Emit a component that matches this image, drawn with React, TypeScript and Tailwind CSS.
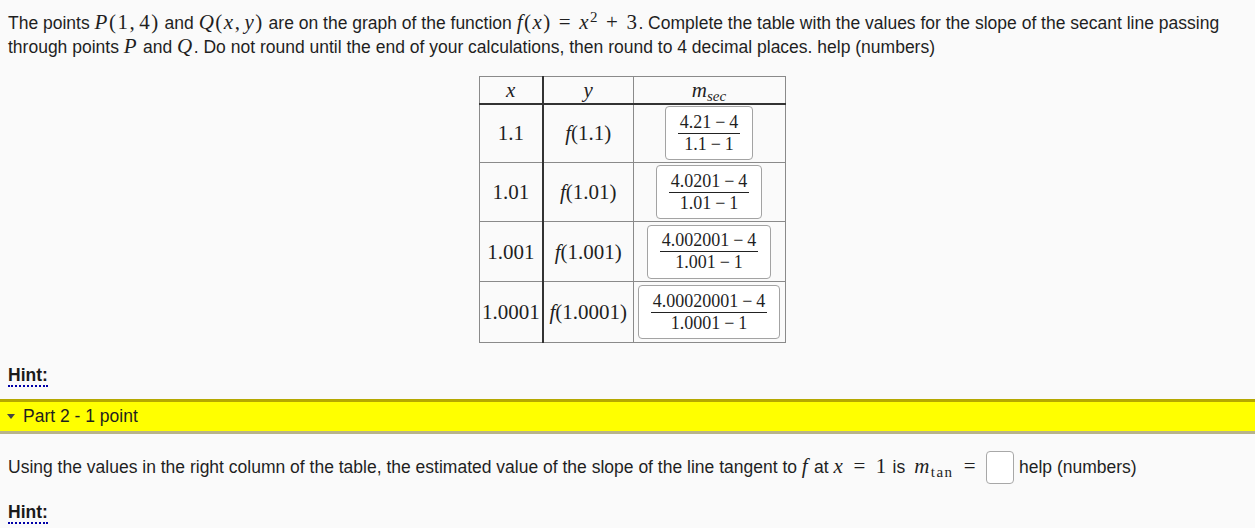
import type { ReactNode } from "react"

const serif = "font-['Liberation_Serif','Times_New_Roman',serif]"

function M({ children }: { children: ReactNode }) {
  return <span className={`${serif} text-[21px] leading-none tracking-[1.5px]`}>{children}</span>
}

function I({ children }: { children: ReactNode }) {
  return <span className="italic">{children}</span>
}

// binary operator with the math spacing around it
function Op({ children, gap = "mx-[7px]" }: { children: ReactNode; gap?: string }) {
  return <span className={gap}>{children}</span>
}

function Frac({ num, den }: { num: string; den: string }) {
  return (
    <span className={`${serif} inline-flex flex-col items-center text-[18px] leading-[21px]`}>
      <span className="px-[2px] border-b border-[#222]">
        {num}
        <Op gap="mx-[4px]">−</Op>4
      </span>
      <span className="px-[2px]">
        {den}
        <Op gap="mx-[4px]">−</Op>1
      </span>
    </span>
  )
}

function Hint() {
  return (
    <span className="font-bold text-[#1a1a1a] border-b-2 border-dotted border-[#0000a8] leading-[19px] inline-block">
      Hint:
    </span>
  )
}

const rows = [
  { x: "1.1", num: "4.21", den: "1.1", h: "h-[59px]" },
  { x: "1.01", num: "4.0201", den: "1.01", h: "h-[59px]" },
  { x: "1.001", num: "4.002001", den: "1.001", h: "h-[60px]" },
  { x: "1.0001", num: "4.00020001", den: "1.0001", h: "h-[61px]" },
]

export default function App() {
  return (
    <div className="min-h-screen bg-[#fafafa] text-[#1f1f1f] font-['Liberation_Sans',Arial,sans-serif] text-[17.5px]">
      <p className="px-2 pt-[11px] leading-[24px]">
        The points{" "}
        <M>
          <I>P</I>(1,<span className="ml-[3px]">4</span>)
        </M>{" "}
        and{" "}
        <M>
          <I>Q</I>(<I>x</I>,<span className="ml-[3px]" />
          <I>y</I>)
        </M>{" "}
        are on the graph of the function{" "}
        <M>
          <I>f</I>(<I>x</I>)<Op>=</Op>
          <I>x</I>
          <sup className="text-[15px]">2</sup>
          <Op>+</Op>3
        </M>
        . Complete the table with the values for the slope of the secant line passing through points{" "}
        <M>
          <I>P</I>
        </M>{" "}
        and{" "}
        <M>
          <I>Q</I>
        </M>
        . Do not round until the end of your calculations, then round to 4 decimal places. help (numbers)
      </p>

      <div className="flex justify-center pl-[9px] mt-[17px]">
        <table className={`${serif} border-collapse border border-[#8a8a8a] text-[21px] leading-[22px]`}>
          <thead>
            <tr className="h-[27px] border-b-2 border-[#333]">
              <th className="w-[64px] font-normal italic border-r-2 border-[#333] p-0">x</th>
              <th className="w-[90px] font-normal italic border-r border-[#8a8a8a] p-0">y</th>
              <th className="w-[152px] font-normal italic p-0">
                m<sub className="text-[15px]">sec</sub>
              </th>
            </tr>
          </thead>
          <tbody>
            {rows.map((r) => (
              <tr key={r.x} className={`${r.h} border-b border-[#8a8a8a]`}>
                <td className="text-center border-r-2 border-[#333] p-0">{r.x}</td>
                <td className="text-center border-r border-[#8a8a8a] p-0">
                  <I>f</I>({r.x})
                </td>
                <td className="text-center p-0">
                  <span className="inline-flex items-center justify-center border border-[#a3a3a3] rounded-[4px] bg-white h-[54px] px-[12px] align-middle">
                    <Frac num={r.num} den={r.den} />
                  </span>
                </td>
              </tr>
            ))}
          </tbody>
        </table>
      </div>

      <div className="px-2 mt-[19px] h-[37px]">
        <Hint />
      </div>

      <div className="h-[35px] bg-[#ffff00] border-t-[3px] border-b-[3px] border-t-[#b5a800] border-b-[#b8b48a] flex items-center gap-[8px] pl-[7px]">
        <span className="w-0 h-0 border-l-[4px] border-r-[4px] border-t-[5px] border-l-transparent border-r-transparent border-t-[#444]" />
        <span>Part 2 - 1 point</span>
      </div>

      <div className="px-2 mt-[17px] flex items-center">
        <span>
          Using the values in the right column of the table, the estimated value of the slope of the line tangent to{" "}
          <M>
            <I>f</I>
          </M>{" "}
          at{" "}
          <M>
            <I>x</I>
            <Op gap="mx-[9px]">=</Op>1
          </M>{" "}
          is{" "}
          <span className="ml-[4px]" />
          <M>
            <I>m</I>
            <sub className="text-[15px]">tan</sub>
            <Op gap="ml-[10px]">=</Op>
          </M>
        </span>
        <span className="inline-block w-[28px] h-[33px] border border-[#a8a8a8] rounded-[4px] bg-white ml-[9px] mr-[5px]" />
        <span>help (numbers)</span>
      </div>

      <div className="px-2 mt-[15px]">
        <Hint />
      </div>
    </div>
  )
}
